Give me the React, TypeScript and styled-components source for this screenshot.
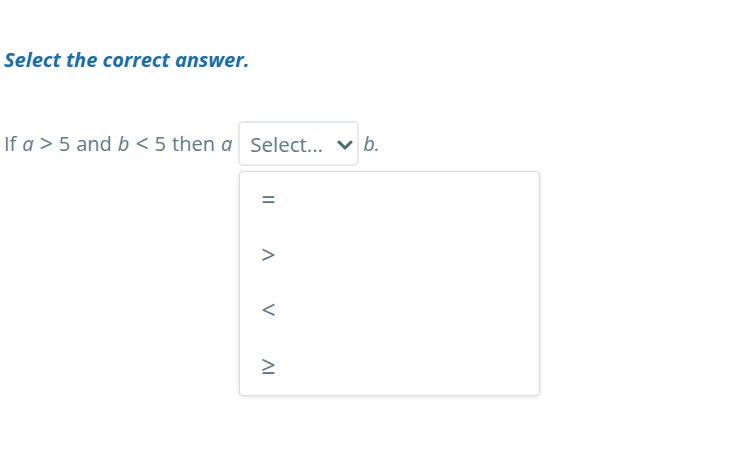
import { ReactElement } from 'react';
import styled, { createGlobalStyle } from 'styled-components';

const GlobalStyle = createGlobalStyle`
    body {
        margin: 0;
        background: #fff;
        font-family: 'Open Sans', 'Noto Sans', sans-serif;
    }
`;

const OPTIONS = ['=', '>', '<', '≥'];

const App = (): ReactElement => {
    return (
        <Wrapper>
            <GlobalStyle />
            <Heading>Select the correct answer.</Heading>
            <Question>
                <Word>If</Word>
                <Var>a</Var>
                <Op>&gt;</Op>
                <Word>5</Word>
                <Word>and</Word>
                <Var>b</Var>
                <Op>&lt;</Op>
                <Word>5</Word>
                <Word>then</Word>
                <Var>a</Var>
                <SelectWrap>
                    <SelectBox>
                        Select...
                        <svg width="16" height="12" viewBox="0 0 16 12">
                            <path d="M2 3 L8 9 L14 3" fill="none" stroke="#4f6973" strokeWidth="3" strokeLinecap="round" strokeLinejoin="round" />
                        </svg>
                    </SelectBox>
                    <Menu>
                        {OPTIONS.map((o) => (
                            <Option key={o}>{o}</Option>
                        ))}
                    </Menu>
                </SelectWrap>
                <Var>b.</Var>
            </Question>
        </Wrapper>
    );
};

const Wrapper = styled.div`
    min-height: 475px;
    padding: 46px 0 0 4px;
    box-sizing: border-box;
`;

const Heading = styled.h2`
    margin: 0;
    color: #1a6ea6;
    font-size: 20px;
    font-weight: 700;
    font-style: italic;
    letter-spacing: 0;
`;

const Question = styled.div`
    display: flex;
    align-items: center;
    margin-top: 48px;
    color: #617a85;
    font-size: 20px;
`;

const Word = styled.span`
    margin-right: 6px;
`;

const Var = styled.i`
    margin-right: 6px;
`;

const Op = styled.span`
    font-size: 23px;
    line-height: 1;
    margin-right: 6px;
`;

const SelectWrap = styled.div`
    position: relative;
    margin-right: 4px;
`;

const SelectBox = styled.div`
    display: flex;
    align-items: center;
    justify-content: space-between;
    box-sizing: border-box;
    width: 121px;
    height: 45px;
    padding: 0 4px 0 10px;
    border: 2px solid #e6e9eb;
    border-radius: 5px;
    color: #617a85;
    font-size: 20.5px;
    svg {
        margin-top: 2px;
    }
`;

const Menu = styled.div`
    position: absolute;
    z-index: 2;
    top: 50px;
    left: 1px;
    width: 301px;
    height: 225px;
    box-sizing: border-box;
    padding-top: 9px;
    background: #fff;
    border: 1px solid #dadada;
    border-radius: 4px;
    box-shadow: 0 1px 5px rgba(0, 0, 0, 0.12);
`;

const Option = styled.div`
    height: 55px;
    padding-left: 21px;
    line-height: 36px;
    color: #5a737e;
    font-size: 25px;
`;

export default App;
